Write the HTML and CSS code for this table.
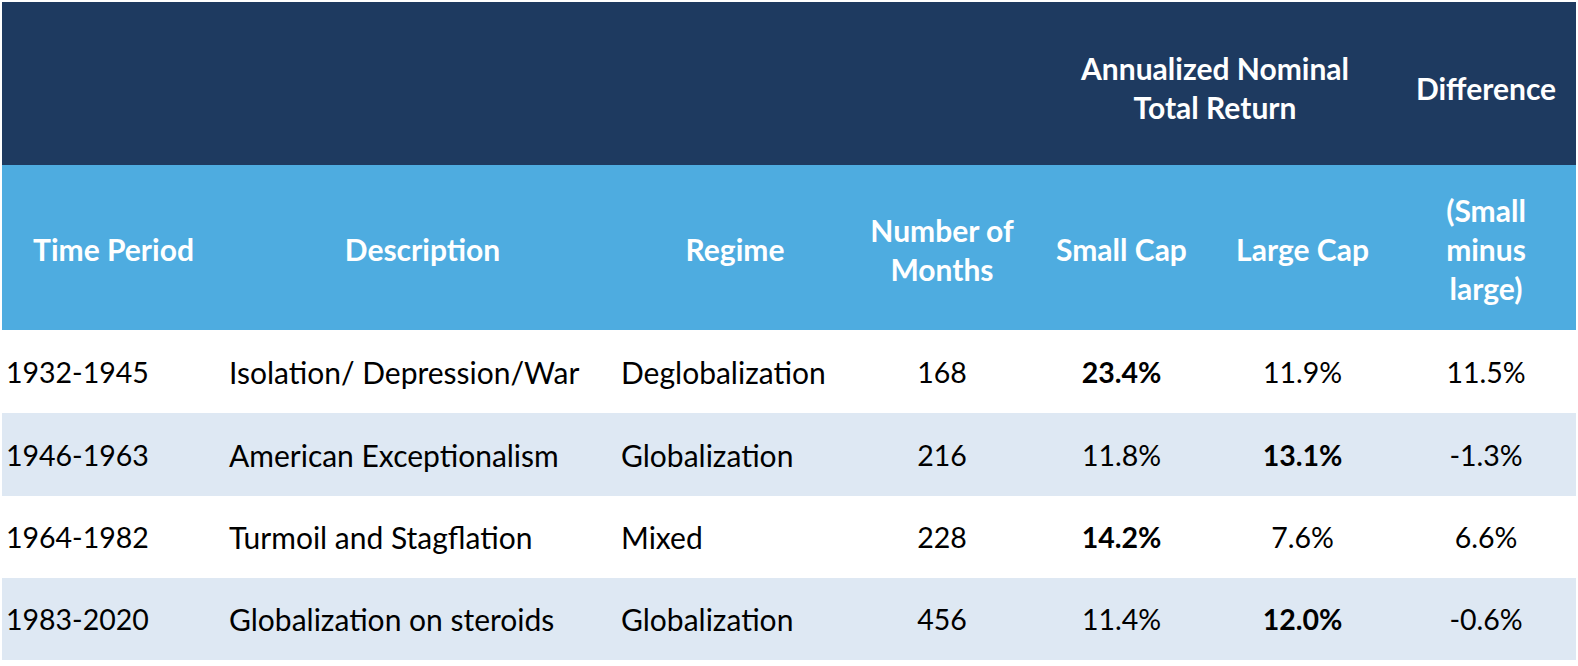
FILE: index.html
```html
<!DOCTYPE html>
<html lang="en">
<head>
<meta charset="utf-8">
<title>Small Cap vs Large Cap Returns by Regime</title>
<link rel="stylesheet" href="styles.css">
</head>
<body>
<div class="wrap">
<table class="returns">
  <colgroup>
    <col class="c-period">
    <col class="c-desc">
    <col class="c-regime">
    <col class="c-months">
    <col class="c-small">
    <col class="c-large">
    <col class="c-diff">
  </colgroup>
  <thead>
    <tr class="group-row">
      <th colspan="4"></th>
      <th colspan="2">Annualized Nominal<br>Total Return</th>
      <th>Difference</th>
    </tr>
    <tr class="label-row">
      <th>Time Period</th>
      <th>Description</th>
      <th>Regime</th>
      <th>Number of<br>Months</th>
      <th>Small Cap</th>
      <th>Large Cap</th>
      <th>(Small<br>minus<br>large)</th>
    </tr>
  </thead>
  <tbody>
    <tr class="row-a">
      <td class="txt t1">1932-1945</td>
      <td class="txt t2">Isolation/ Depression/War</td>
      <td class="txt t3">Deglobalization</td>
      <td class="num">168</td>
      <td class="num"><b>23.4%</b></td>
      <td class="num">11.9%</td>
      <td class="num">11.5%</td>
    </tr>
    <tr class="row-b">
      <td class="txt t1">1946-1963</td>
      <td class="txt t2">American Exceptionalism</td>
      <td class="txt t3">Globalization</td>
      <td class="num">216</td>
      <td class="num">11.8%</td>
      <td class="num"><b>13.1%</b></td>
      <td class="num">-1.3%</td>
    </tr>
    <tr class="row-a short">
      <td class="txt t1">1964-1982</td>
      <td class="txt t2">Turmoil and Stagflation</td>
      <td class="txt t3">Mixed</td>
      <td class="num">228</td>
      <td class="num"><b>14.2%</b></td>
      <td class="num">7.6%</td>
      <td class="num">6.6%</td>
    </tr>
    <tr class="row-b short">
      <td class="txt t1">1983-2020</td>
      <td class="txt t2">Globalization on steroids</td>
      <td class="txt t3">Globalization</td>
      <td class="num">456</td>
      <td class="num">11.4%</td>
      <td class="num"><b>12.0%</b></td>
      <td class="num">-0.6%</td>
    </tr>
  </tbody>
</table>
</div>
</body>
</html>
```

FILE: styles.css
```css
html, body {
  margin: 0;
  padding: 0;
  background: #ffffff;
}

.wrap {
  padding: 2px;
}

.returns {
  border-collapse: collapse;
  table-layout: fixed;
  width: 1574px;
  font-family: Lato, "Open Sans", "Liberation Sans", sans-serif;
  font-size: 28.5px;
  color: #000000;
}

.c-period { width: 223px; }
.c-desc { width: 395px; }
.c-regime { width: 230px; }
.c-months { width: 184px; }
.c-small { width: 175px; }
.c-large { width: 187px; }
.c-diff { width: 180px; }

.returns th,
.returns td {
  padding: 0;
  vertical-align: middle;
}

.returns th {
  color: #ffffff;
  font-weight: 700;
  font-size: 30px;
  text-align: center;
  line-height: 39px;
  white-space: nowrap;
}

.group-row th {
  height: 163px;
  background: #1e3a60;
  padding-top: 9px;
  box-sizing: border-box;
}

.label-row th {
  height: 165px;
  background: #4eace0;
  padding-top: 4px;
  box-sizing: border-box;
}

.returns td {
  height: 83px;
  line-height: 34px;
  white-space: nowrap;
}

.returns tr.short td {
  height: 82px;
}

.row-a td { background: #ffffff; }
.row-b td { background: #dee8f3; }

.returns .txt { text-align: left; }
.returns .t1 { padding-left: 4px; }
.returns .t2 { padding-left: 4px; font-size: 30px; }
.returns .t3 { padding-left: 1px; font-size: 30px; }

.returns .num { text-align: center; }

.num b { font-weight: 700; }
```
